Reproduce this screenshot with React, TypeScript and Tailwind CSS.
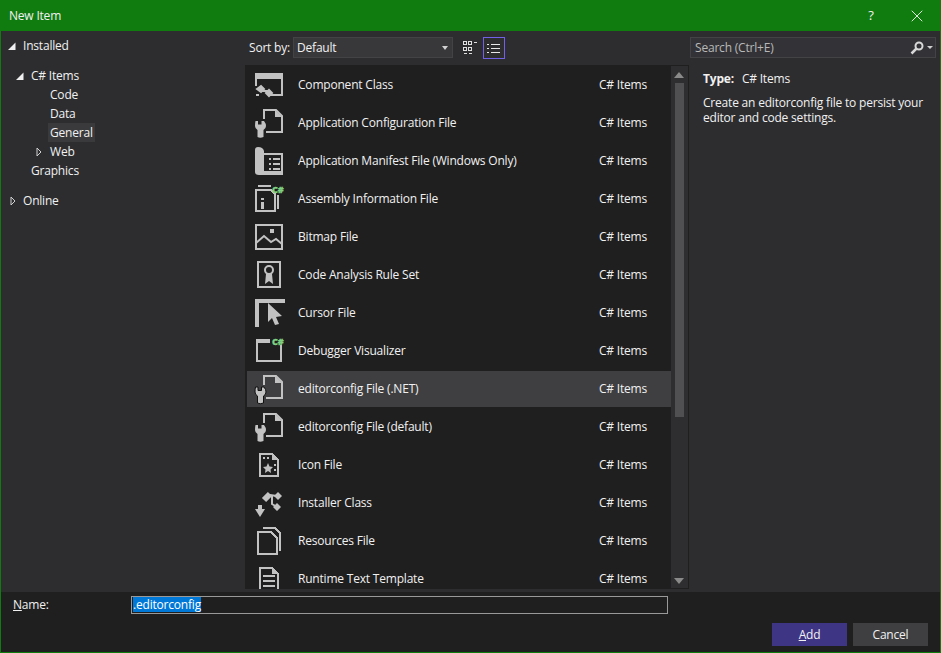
import React from "react";
import { X } from "lucide-react";

const font = "font-['Open_Sans','Noto_Sans',sans-serif] tracking-[-0.2px]";
const G = "#c2c2c2";

const Sharp = ({ className = "", children, w = 32, h = 32 }: { className?: string; children: React.ReactNode; w?: number; h?: number }) => (
  <svg width={w} height={h} viewBox={`0 0 ${w} ${h}`} className={className} shapeRendering="crispEdges">
    {children}
  </svg>
);

const CSharp = ({ x = 18, y = 10 }: { x?: number; y?: number }) => (
  <text x={x} y={y} fontSize="9" fontWeight="800" fill="#7fd283" stroke="#7fd283" strokeWidth="0.3" fontFamily="Open Sans, sans-serif">C#</text>
);

const Wrench = ({ dark = false }: { dark?: boolean }) => (
  <path
    d="M1.5 14 L4 14 L4 17.5 L7.5 17.5 L7.5 14 L10 14 Q12 16.5 12 19 Q12 21.5 9.5 23 L9.5 30 Q6 31.5 3.5 30 L3.5 23 Q1 21.5 1 19 Q1 16 1.5 14 Z"
    fill={G}
    stroke={dark ? "#111" : "none"}
    strokeWidth={dark ? 1 : 0}
    shapeRendering="auto"
  />
);

const ConfigIcon = ({ dark = false }: { dark?: boolean }) => (
  <Sharp>
    <path d="M10 12 V3 H22 L28 9 V25 H12" fill="none" stroke={G} strokeWidth="2" shapeRendering="auto" />
    <path d="M21 3 V10 H28 Z" fill={G} shapeRendering="auto" />
    <Wrench dark={dark} />
  </Sharp>
);

const ComponentIcon = () => (
  <Sharp>
    <rect x="1" y="4" width="28" height="6" fill={G} />
    <path d="M2 10 V17 M28 10 V26 H16" stroke={G} strokeWidth="2" fill="none" />
    <path d="M2 26 H5 M3 20 L7 17 L10 20 L7 23 Z M12 24 L15 21 L18 24 L15 27 Z M7 22 H14" stroke={G} strokeWidth="2" fill={G} shapeRendering="auto" />
  </Sharp>
);

const ManifestIcon = () => (
  <Sharp>
    <g transform="translate(-1 0)">
      <path d="M2 5 Q2 2 5 2 Q10 2 11 6 V26 H30 V30 H6 Q2 30 2 27 Z" fill={G} shapeRendering="auto" />
      <path d="M11 9 H29 V28" fill="none" stroke={G} strokeWidth="2" />
      <path d="M16 14 H18 M20 14 H27 M16 19 H18 M20 19 H27 M16 24 H18 M20 24 H27" stroke={G} strokeWidth="2" />
    </g>
  </Sharp>
);

const AssemblyIcon = () => (
  <Sharp>
    <path d="M2 7 H17 L21 11 V28 H2 Z" fill="none" stroke={G} strokeWidth="2" />
    <path d="M4 3 H17 M24 12 V26" stroke={G} strokeWidth="2" />
    <path d="M7 15 H10 V17 H7 Z M7 19 H10 V26 H7 Z" fill={G} />
    <CSharp />
  </Sharp>
);

const BitmapIcon = () => (
  <Sharp>
    <rect x="2" y="4" width="26" height="24" fill="none" stroke={G} strokeWidth="2" />
    <circle cx="18" cy="10" r="2.5" fill={G} />
    <path d="M2 22 L10 15 L17 21 L22 18 L28 23" fill="none" stroke={G} strokeWidth="2" shapeRendering="auto" />
  </Sharp>
);

const RuleIcon = () => (
  <Sharp>
    <rect x="4" y="3" width="22" height="25" fill="none" stroke={G} strokeWidth="2" />
    <circle cx="15" cy="11" r="4" fill="none" stroke={G} strokeWidth="2" shapeRendering="auto" />
    <path d="M12 15 L11 25 L15 22 L19 25 L18 15 Z" fill={G} shapeRendering="auto" />
  </Sharp>
);

const CursorIcon = () => (
  <Sharp>
    <path d="M1 2 H31 V6 H5 V30 H1 Z" fill={G} />
    <path d="M14 6 L28 19 L22 20 L25 27 L21 28 L18 21 L14 25 Z" fill={G} shapeRendering="auto" />
  </Sharp>
);

const DebuggerIcon = () => (
  <Sharp>
    <rect x="2" y="4" width="26" height="4" fill={G} />
    <rect x="3" y="7" width="24" height="19" fill="none" stroke={G} strokeWidth="2" />
    <rect x="16" y="1" width="14" height="9" fill="#1f1f1f" />
    <CSharp />
  </Sharp>
);

const IconFileIcon = () => (
  <Sharp>
    <path d="M6 5 H18 L24 11 V27 H6 Z" fill="none" stroke={G} strokeWidth="2" />
    <path d="M18 5 V11 H24 Z" fill={G} />
    <path d="M9 8 H11 V10 H9 Z M13 8 H15 V10 H13 Z M20 15 H22 V17 H20 Z M20 20 H22 V22 H20 Z" fill={G} />
    <path d="M14 14 L15.5 17.5 L19 18 L16.5 20.5 L17 24 L14 22 L11 24 L11.5 20.5 L9 18 L12.5 17.5 Z" fill={G} shapeRendering="auto" />
  </Sharp>
);

const InstallerIcon = () => (
  <Sharp>
    <path d="M10 13 L16 7" stroke={G} strokeWidth="6" fill="none" shapeRendering="auto" />
    <path d="M24 5 L28 9 L24 13 L20 9 Z M23 16 L27 20 L23 24 L19 20 Z" fill={G} shapeRendering="auto" />
    <path d="M16 8 L23 9 M18 9 V17 L23 20" fill="none" stroke={G} strokeWidth="2" shapeRendering="auto" />
    <path d="M6 18 V25" stroke={G} strokeWidth="4" fill="none" shapeRendering="auto" />
    <path d="M1 22 H11 L6 30 Z" fill={G} shapeRendering="auto" />
  </Sharp>
);

const ResourcesIcon = () => (
  <Sharp>
    <path d="M4 7 H17 L23 13 V29 H4 Z" fill="none" stroke={G} strokeWidth="2" />
    <path d="M9 3 H21 L26 8 V26" fill="none" stroke={G} strokeWidth="2" />
  </Sharp>
);

const TemplateIcon = () => (
  <Sharp>
    <path d="M6 5 H18 L24 11 V33 H6 Z" fill="none" stroke={G} strokeWidth="2" />
    <path d="M18 5 V11 H24 Z" fill={G} />
    <path d="M9 13 H21 M9 18 H21 M9 23 H21" stroke={G} strokeWidth="2" />
  </Sharp>
);

const items: { name: string; icon: React.ReactNode; selected?: boolean }[] = [
  { name: "Component Class", icon: <ComponentIcon /> },
  { name: "Application Configuration File", icon: <ConfigIcon /> },
  { name: "Application Manifest File (Windows Only)", icon: <ManifestIcon /> },
  { name: "Assembly Information File", icon: <AssemblyIcon /> },
  { name: "Bitmap File", icon: <BitmapIcon /> },
  { name: "Code Analysis Rule Set", icon: <RuleIcon /> },
  { name: "Cursor File", icon: <CursorIcon /> },
  { name: "Debugger Visualizer", icon: <DebuggerIcon /> },
  { name: "editorconfig File (.NET)", icon: <ConfigIcon dark />, selected: true },
  { name: "editorconfig File (default)", icon: <ConfigIcon /> },
  { name: "Icon File", icon: <IconFileIcon /> },
  { name: "Installer Class", icon: <InstallerIcon /> },
  { name: "Resources File", icon: <ResourcesIcon /> },
  { name: "Runtime Text Template", icon: <TemplateIcon /> },
];

const Expanded = () => (
  <svg width="8" height="8" viewBox="0 0 8 8" className="shrink-0"><path d="M7.5 0.5 V8 H0 Z" fill="#f0f0f0" /></svg>
);
const Collapsed = () => (
  <svg width="6" height="10" viewBox="0 0 6 10" className="shrink-0"><path d="M1 1 L5 5 L1 9 Z" fill="none" stroke="#d0d0d0" /></svg>
);

const TreeRow = ({ left, className = "", arrow, children }: { left: string; className?: string; arrow?: React.ReactNode; children: React.ReactNode }) => (
  <div className={`flex h-[19px] items-center ${left} ${className}`}>
    {arrow && <span className="flex w-[15px] items-center">{arrow}</span>}
    <span>{children}</span>
  </div>
);

const Sidebar = () => (
  <div className="w-[244px] shrink-0 pt-[5px] text-[12px] text-[#f1f1f1]">
    <TreeRow left="pl-[7px]" arrow={<Expanded />}>Installed</TreeRow>
    <div className="mt-[11px]">
      <TreeRow left="pl-[15px]" arrow={<Expanded />}>C# Items</TreeRow>
      <TreeRow left="pl-[49px]">Code</TreeRow>
      <TreeRow left="pl-[49px]">Data</TreeRow>
      <div className="flex h-[19px] items-center pl-[47px]">
        <span className="flex h-[19px] items-center bg-[#3a3a3c] px-[2px]">General</span>
      </div>
      <TreeRow left="pl-[35px]" arrow={<Collapsed />}><span className="-ml-[1px]">Web</span></TreeRow>
      <TreeRow left="pl-[30px]">Graphics</TreeRow>
    </div>
    <div className="mt-[11px]">
      <TreeRow left="pl-[9px]" arrow={<Collapsed />}><span className="-ml-[2px]">Online</span></TreeRow>
    </div>
  </div>
);

const Toolbar = () => (
  <div className="flex h-[34px] items-start pt-[6px] pl-[4px] text-[12px] text-[#f1f1f1]">
    <span className="flex h-[21px] w-[44px] items-center">Sort by:</span>
    <div className="flex h-[21px] w-[160px] items-center justify-between border border-[#434346] bg-[#38383a] pl-[3px] pr-[4px]">
      <span>Default</span>
      <svg width="6" height="4" viewBox="0 0 6 4"><path d="M0 0 H6 L3 4 Z" fill="#d0d0d0" /></svg>
    </div>
    <span className="ml-[6px] flex h-[22px] w-[22px] items-center justify-center">
      <Sharp w={14} h={14}>
        <path d="M0.5 0.5 H3.5 V3.5 H0.5 Z M5.5 0.5 H8.5 V3.5 H5.5 Z M0.5 6.5 H3.5 V9.5 H0.5 Z M5.5 6.5 H8.5 V9.5 H5.5 Z" fill="none" stroke="#e0e0e0" />
        <path d="M11 1 H14 V2 H11 Z M1 12 H4 V13 H1 Z M6 12 H9 V13 H6 Z" fill="#e0e0e0" />
      </Sharp>
    </span>
    <span className="ml-[2px] flex h-[22px] w-[22px] items-center justify-center border border-[#7160e8]">
      <Sharp w={14} h={12}>
        <path d="M0 2 H2 V3 H0 Z M0 6 H2 V7 H0 Z M0 10 H2 V11 H0 Z M4 2 H13 V3 H4 Z M4 6 H13 V7 H4 Z M4 10 H13 V11 H4 Z" fill="#e8e8e8" />
      </Sharp>
    </span>
  </div>
);

const ItemRow = ({ name, icon, selected }: { name: string; icon: React.ReactNode; selected?: boolean }) => (
  <div className="flex h-[38px] shrink-0 items-center">
    <div className={`flex h-[36px] w-full items-center ${selected ? "bg-[#3f3f41]" : ""}`}>
      <span className="ml-[7px] flex w-[44px] shrink-0 items-center">{icon}</span>
      <span className="flex-1 truncate">{name}</span>
      <span className="w-[72px] shrink-0">C# Items</span>
    </div>
  </div>
);

const Scrollbar = () => (
  <div className="flex w-[18px] shrink-0 flex-col items-center border border-l-0 border-[#1f1f1f] bg-[#2e2e30] pt-[6px] pr-[1px]">
    <svg width="10" height="6" viewBox="0 0 10 6"><path d="M5 0 L10 6 H0 Z" fill="#8a8a8a" /></svg>
    <div className="mt-[5px] h-[334px] w-[9px] bg-[#505052]" />
    <div className="flex-1" />
    <svg width="10" height="6" viewBox="0 0 10 6" className="mb-[4px]"><path d="M0 0 H10 L5 6 Z" fill="#8a8a8a" /></svg>
  </div>
);

const Details = () => (
  <div className="w-[251px] shrink-0 pt-[6px] text-[12px] text-[#f1f1f1]">
    <div className="ml-[1px] flex h-[21px] w-[246px] items-center justify-between border border-[#434346] bg-[#333337] pl-[4px] pr-[2px] text-[#b8b8b8]">
      <span>Search (Ctrl+E)</span>
      <span className="flex items-center gap-[3px]">
        <svg width="14" height="14" viewBox="0 0 14 14">
          <circle cx="9" cy="5" r="3.5" fill="none" stroke="#d8d8d8" strokeWidth="2" />
          <path d="M6.5 7.5 L1.5 12.5" stroke="#d8d8d8" strokeWidth="2.5" />
        </svg>
        <svg width="6" height="3" viewBox="0 0 6 3"><path d="M0 0 H6 L3 3 Z" fill="#d0d0d0" /></svg>
      </span>
    </div>
    <div className="ml-[14px] mt-[12px] w-[225px] leading-[15px]">
      <div className="flex h-[17px] items-center">
        <span className="font-bold">Type:</span>
        <span className="ml-[8px]">C# Items</span>
      </div>
      <p className="mt-[8px]">Create an editorconfig file to persist your editor and code settings.</p>
    </div>
  </div>
);

export default function App() {
  return (
    <div className={`${font} flex h-[653px] w-[941px] flex-col border border-[#107c10] bg-[#2d2d30]`}>
      <div className="flex h-[30px] shrink-0 items-center justify-between bg-[#107c10] pl-[8px] text-[12px] text-[#f1f1f1]">
        <span>New Item</span>
        <div className="flex items-center">
          <span className="w-[46px] text-center text-[13px]">?</span>
          <span className="flex w-[46px] justify-center"><X size={20} strokeWidth={1.1} color="#f1f1f1" /></span>
        </div>
      </div>

      <div className="flex min-h-0 flex-1">
        <Sidebar />
        <div className="flex w-[444px] shrink-0 flex-col">
          <Toolbar />
          <div className="flex min-h-0 flex-1 text-[12px] text-[#f1f1f1]">
            <div className="flex min-w-0 flex-1 flex-col overflow-hidden bg-[#1f1f1f] pt-[1px] pl-[2px]">
              {items.map((it) => (
                <ItemRow key={it.name} name={it.name} icon={it.icon} selected={it.selected} />
              ))}
            </div>
            <Scrollbar />
          </div>
          <div className="h-[3px] shrink-0" />
        </div>
        <Details />
      </div>

      <div className="h-[60px] shrink-0 bg-[#1f1f1f] text-[12px] text-[#f1f1f1]">
        <div className="flex h-[21px] items-center pt-[4px]">
          <span className="ml-[12px] w-[118px]"><span className="underline">N</span>ame:</span>
          <div className="flex h-[18px] w-[537px] items-center border border-[#999999] bg-[#1f1f1f] px-[1px]">
            <span className="bg-[#0078d7] leading-[15px] text-white">.editorconfig</span>
          </div>
        </div>
        <div className="mt-[10px] flex justify-end gap-[6px] pr-[12px]">
          <button className="h-[23px] w-[75px] bg-[#3f3585] text-center"><span className="underline">A</span>dd</button>
          <button className="h-[23px] w-[75px] bg-[#3f3f41] text-center">Cancel</button>
        </div>
      </div>
    </div>
  );
}
